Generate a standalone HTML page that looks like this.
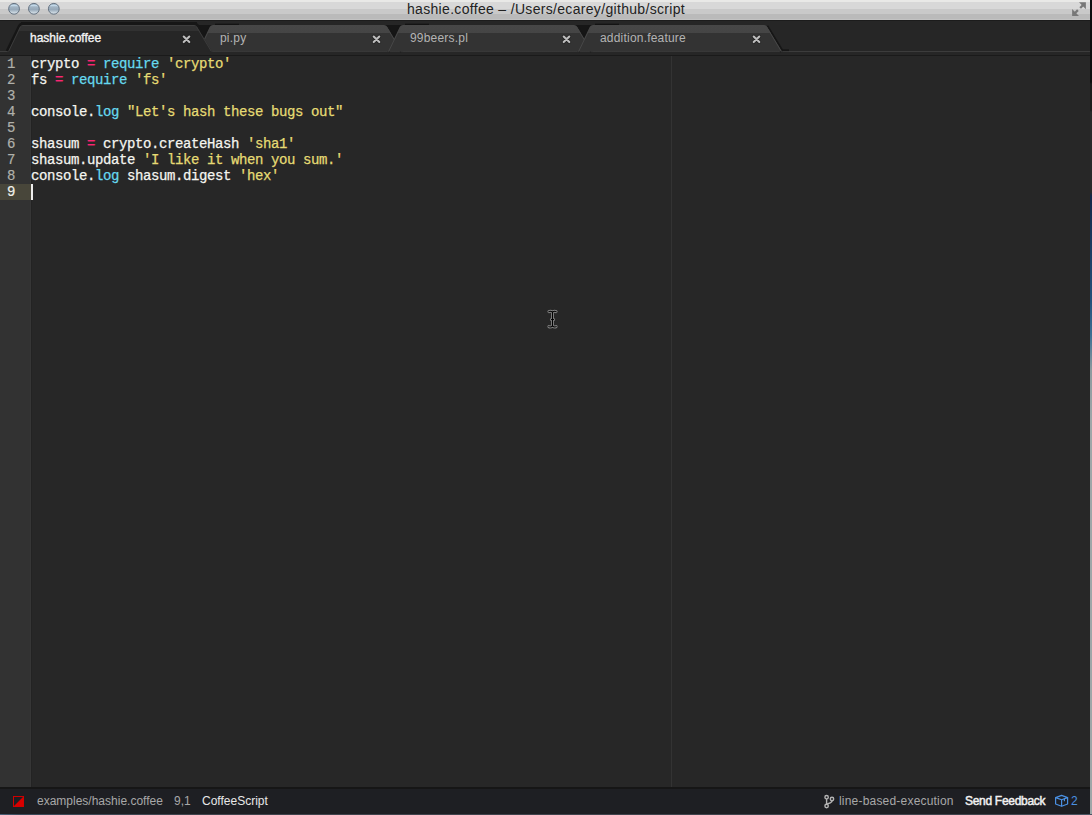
<!DOCTYPE html>
<html><head><meta charset="utf-8">
<style>
html,body{margin:0;padding:0;}
body{width:1092px;height:815px;overflow:hidden;position:relative;background:linear-gradient(#0e0e0e 0px,#0e0e0e 82px,#1c1c1c 84px,#1c1c1c 110px,#2a2a2a 112px,#2a2a2a 192px,#142848 196px,#24507a 300px,#3d6f92 335px,#8c9a9e 370px,#9ea6a8 420px,#9ea6a8 815px);font-family:"Liberation Sans",sans-serif;}
#win{position:absolute;left:0;top:0;width:1090px;height:814px;background:#262626;overflow:hidden;}
#bottomstrip{position:absolute;left:0;top:813.5px;width:1092px;height:2px;background:linear-gradient(90deg,#4a6078 0px,#3a4a5a 20px,#40434c 200px,#40434c 1000px,#4a5563 1092px);}
#title{position:absolute;left:0;top:0;width:1090px;height:20px;background:linear-gradient(#e9e9e7 0px,#e9e9e7 2px,#d8d8d8 2px,#d8d8d8 9px,#c9c9c9 9px,#c9c9c9 14px,#bababa 14px,#bababa 19.5px,#c2c2c2 19.5px);}
#title .t{position:absolute;left:0;width:1092px;top:1px;text-align:center;font-size:14px;line-height:16px;color:#222;letter-spacing:0.32px;}
#tabs{position:absolute;left:0;top:20px;width:1090px;height:36px;}
#editor{position:absolute;left:0;top:56px;width:1090px;height:731px;background:#272727;}
#gutter{position:absolute;left:0;top:0;width:31px;height:731px;background:#323232;box-shadow:inset -1px 0 0 #363636;}
#gshade{position:absolute;left:31px;top:0;width:1px;height:731px;background:#232323;}
.ln{position:absolute;left:0;width:31px;height:16px;font-family:"Liberation Mono",monospace;font-size:14px;line-height:16px;color:#b0b0aa;-webkit-text-stroke:0.2px currentColor;}
.ln span{position:absolute;left:7px;top:0;}
.hl{background:#48463a;color:#f0f0ea;}
#code{position:absolute;left:31px;top:0;-webkit-text-stroke:0.25px currentColor;font-family:"Liberation Mono",monospace;font-size:14px;letter-spacing:-0.4px;line-height:16px;color:#f5f5f0;white-space:pre;}
#code div{height:16px;}
.k{color:#f92672;}
.s{color:#e6db74;}
.f{color:#66d9ef;}
#cursor{position:absolute;left:31px;top:128px;width:1.5px;height:16px;background:#ececec;}
#wrap{position:absolute;left:671px;top:0;width:1px;height:731px;background:#333333;}
.tl{position:absolute;top:11px;font-size:12px;line-height:14px;color:#b4b4b4;white-space:nowrap;letter-spacing:0.2px;}
.tl.act{color:#f4f4f4;letter-spacing:0;-webkit-text-stroke:0.35px #f4f4f4;}
#status{position:absolute;left:0;top:787px;width:1090px;height:28px;background:#1e1f23;border-top:2px solid #161616;box-sizing:border-box;font-size:12px;color:#a8a8a8;}
#status .it{position:absolute;top:5px;line-height:14px;white-space:nowrap;}
</style></head>
<body>
<div id="win">
  <div id="title">
    <svg width="1090" height="20" style="position:absolute;left:0;top:0;display:block">
      <defs>
        <linearGradient id="tl" x1="0" y1="0" x2="0" y2="1">
          <stop offset="0" stop-color="#7f93a5"/>
          <stop offset="0.18" stop-color="#c6dcec"/>
          <stop offset="0.32" stop-color="#a3b5c4"/>
          <stop offset="0.58" stop-color="#97a9b9"/>
          <stop offset="0.85" stop-color="#c9d5de"/>
          <stop offset="1" stop-color="#d8e0e6"/>
        </linearGradient>
      </defs>
      <circle cx="14.05" cy="8.8" r="5.4" fill="url(#tl)" stroke="#5b6a79" stroke-width="0.9"/>
      <circle cx="33.9" cy="8.8" r="5.4" fill="url(#tl)" stroke="#5b6a79" stroke-width="0.9"/>
      <circle cx="53.8" cy="8.8" r="5.4" fill="url(#tl)" stroke="#5b6a79" stroke-width="0.9"/>
      <path d="M1079,2.2 L1085.9,2.2 L1085.9,9.2 Z" fill="#787878"/>
      <path d="M1083.8,4.4 L1080.2,8" stroke="#787878" stroke-width="2.2"/>
      <path d="M1072.1,9 L1072.1,15.9 L1079,15.9 Z" fill="#787878"/>
      <path d="M1074.3,13.7 L1077.9,10.1" stroke="#787878" stroke-width="2.2"/>
    </svg>
    <div class="t">hashie.coffee – /Users/ecarey/github/script</div>
  </div>
  <div id="tabs"><svg width="1090" height="36" viewBox="0 20 1090 36" style="position:absolute;left:0;top:0;display:block">
<defs>
<linearGradient id="ga" gradientUnits="userSpaceOnUse" x1="0" y1="25" x2="0" y2="52"><stop offset="0" stop-color="#3e3e3e"/><stop offset="0.037" stop-color="#3e3e3e"/><stop offset="0.037" stop-color="#313131"/><stop offset="0.222" stop-color="#313131"/><stop offset="0.222" stop-color="#262626"/><stop offset="1" stop-color="#262626"/></linearGradient>
<linearGradient id="gi" gradientUnits="userSpaceOnUse" x1="0" y1="25" x2="0" y2="52"><stop offset="0" stop-color="#474747"/><stop offset="0.296" stop-color="#454545"/><stop offset="0.296" stop-color="#333333"/><stop offset="1" stop-color="#333333"/></linearGradient>
</defs>
<rect x="0" y="20" width="1090" height="36" fill="#262626"/>
<rect x="0" y="20" width="1090" height="1" fill="#1c1c1c"/>
<rect x="0" y="51" width="1090" height="1" fill="#3c3c3c"/>
<rect x="0" y="55" width="1090" height="1" fill="#1a1a1a"/>
<rect x="194" y="25" width="19" height="14" fill="#161616"/>
<rect x="384" y="25" width="19" height="14" fill="#161616"/>
<rect x="574" y="25" width="19" height="14" fill="#161616"/>
<path d="M198,51.5 L210.4,26.2" fill="none" stroke="#161616" stroke-width="3.6"/>
<path d="M386.6,26.2 L402,51.5" fill="none" stroke="#161616" stroke-width="3.6"/>
<path d="M388,51.5 L400.4,26.2" fill="none" stroke="#161616" stroke-width="3.6"/>
<path d="M576.6,26.2 L592,51.5" fill="none" stroke="#161616" stroke-width="3.6"/>
<path d="M578,51.5 L590.4,26.2" fill="none" stroke="#161616" stroke-width="3.6"/>
<path d="M766.6,26.2 L782,51.5" fill="none" stroke="#161616" stroke-width="3.6"/>
<path d="M782,50.2 L789,50.2" stroke="#161616" stroke-width="1.8"/>
<path d="M8,51.5 L20.2,26.6 Q21,25 23,25 L194,25 Q196,25 196.9,26.6 L212,51.5" fill="none" stroke="#161616" stroke-width="5" stroke-linejoin="round"/>
<path d="M21,23.5 L197,23.5" fill="none" stroke="#161616" stroke-width="3"/>
<path d="M198,51.5 L210.2,26.6 Q211,25 213,25 L384,25 Q386,25 386.9,26.6 L402,51.5 Z" fill="url(#gi)"/>
<path d="M198.6,51.5 L210.6,26.6" stroke="#474747" stroke-width="1" fill="none"/>
<path d="M386.4,26.6 L401.4,51.5" stroke="#474747" stroke-width="1" fill="none"/>
<path d="M373.7,36.5 L379.3,42.099999999999994 M379.3,36.5 L373.7,42.099999999999994" stroke="#141414" stroke-width="3.6" stroke-linecap="round" opacity="0.55"/>
<path d="M373.7,36.5 L379.3,42.099999999999994 M379.3,36.5 L373.7,42.099999999999994" stroke="#bdbdbd" stroke-width="2.1" stroke-linecap="round"/>
<path d="M388,51.5 L400.2,26.6 Q401,25 403,25 L574,25 Q576,25 576.9,26.6 L592,51.5 Z" fill="url(#gi)"/>
<path d="M388.6,51.5 L400.6,26.6" stroke="#474747" stroke-width="1" fill="none"/>
<path d="M576.4,26.6 L591.4,51.5" stroke="#474747" stroke-width="1" fill="none"/>
<path d="M563.7,36.5 L569.3,42.099999999999994 M569.3,36.5 L563.7,42.099999999999994" stroke="#141414" stroke-width="3.6" stroke-linecap="round" opacity="0.55"/>
<path d="M563.7,36.5 L569.3,42.099999999999994 M569.3,36.5 L563.7,42.099999999999994" stroke="#bdbdbd" stroke-width="2.1" stroke-linecap="round"/>
<path d="M578,51.5 L590.2,26.6 Q591,25 593,25 L764,25 Q766,25 766.9,26.6 L782,51.5 Z" fill="url(#gi)"/>
<path d="M578.6,51.5 L590.6,26.6" stroke="#474747" stroke-width="1" fill="none"/>
<path d="M766.4,26.6 L781.4,51.5" stroke="#474747" stroke-width="1" fill="none"/>
<path d="M753.7,36.5 L759.3,42.099999999999994 M759.3,36.5 L753.7,42.099999999999994" stroke="#141414" stroke-width="3.6" stroke-linecap="round" opacity="0.55"/>
<path d="M753.7,36.5 L759.3,42.099999999999994 M759.3,36.5 L753.7,42.099999999999994" stroke="#bdbdbd" stroke-width="2.1" stroke-linecap="round"/>
<rect x="8" y="51" width="204" height="4" fill="#262626"/>
<path d="M8,51.5 L20.2,26.6 Q21,25 23,25 L194,25 Q196,25 196.9,26.6 L212,51.5 Z" fill="url(#ga)"/>
<path d="M8.6,51.5 L20.6,26.6" stroke="#3b3b3b" stroke-width="1" fill="none"/>
<path d="M196.4,26.6 L211.4,51.5" stroke="#3b3b3b" stroke-width="1" fill="none"/>
<path d="M183.7,36.5 L189.3,42.099999999999994 M189.3,36.5 L183.7,42.099999999999994" stroke="#141414" stroke-width="3.6" stroke-linecap="round" opacity="0.55"/>
<path d="M183.7,36.5 L189.3,42.099999999999994 M189.3,36.5 L183.7,42.099999999999994" stroke="#bdbdbd" stroke-width="2.1" stroke-linecap="round"/>
<rect x="215" y="23.7" width="24" height="1.2" fill="#121212"/>
<rect x="405" y="23.7" width="24" height="1.2" fill="#121212"/>
<rect x="595" y="23.7" width="24" height="1.2" fill="#121212"/>
</svg>
<div class="tl act" style="left:30px">hashie.coffee</div>
<div class="tl" style="left:220px">pi.py</div>
<div class="tl" style="left:410px">99beers.pl</div>
<div class="tl" style="left:600px">addition.feature</div></div>
  <div id="editor">
    <div id="gutter">
      <div class="ln" style="top:0"><span>1</span></div>
      <div class="ln" style="top:16px"><span>2</span></div>
      <div class="ln" style="top:32px"><span>3</span></div>
      <div class="ln" style="top:48px"><span>4</span></div>
      <div class="ln" style="top:64px"><span>5</span></div>
      <div class="ln" style="top:80px"><span>6</span></div>
      <div class="ln" style="top:96px"><span>7</span></div>
      <div class="ln" style="top:112px"><span>8</span></div>
      <div class="ln hl" style="top:128px"><span>9</span></div>
    </div>
    <div id="gshade"></div>
    <div id="wrap"></div>
    <div id="code"><div>crypto <span class="k">=</span> <span class="f">require</span> <span class="s">'crypto'</span></div><div>fs <span class="k">=</span> <span class="f">require</span> <span class="s">'fs'</span></div><div></div><div>console.<span class="f">log</span> <span class="s">"Let's hash these bugs out"</span></div><div></div><div>shasum <span class="k">=</span> crypto.createHash <span class="s">'sha1'</span></div><div>shasum.update <span class="s">'I like it when you sum.'</span></div><div>console.<span class="f">log</span> shasum.digest <span class="s">'hex'</span></div><div></div></div>
    <div id="cursor"></div>
    <svg width="20" height="30" viewBox="542 306 20 30" style="position:absolute;left:542px;top:250px;display:block">
      <g fill="none" stroke="#8a8a8a" stroke-width="3" stroke-linecap="round" stroke-linejoin="round" opacity="0.9">
        <path d="M548.9,311.6 Q550.6,310.6 552.5,312.2 Q554.4,310.6 556.1,311.6 M552.5,312 L552.5,326 M548.9,326.6 Q550.6,327.6 552.5,326 Q554.4,327.6 556.1,326.6 M551.4,319.5 L553.6,319.5"/>
      </g>
      <g fill="none" stroke="#000" stroke-width="1.1" stroke-linecap="round">
        <path d="M548.9,311.6 Q550.6,310.6 552.5,312.2 Q554.4,310.6 556.1,311.6 M552.5,312 L552.5,326 M548.9,326.6 Q550.6,327.6 552.5,326 Q554.4,327.6 556.1,326.6 M551.4,319.5 L553.6,319.5"/>
      </g>
    </svg>
  </div>
  <div id="status">
    <svg width="1090" height="28" viewBox="0 787 1090 28" style="position:absolute;left:0;top:-2px;display:block">
      <rect x="13.5" y="796.5" width="10" height="10" fill="none" stroke="#d00000" stroke-width="1"/>
      <path d="M23.5,796.5 L23.5,806.5 L13.5,806.5 Z" fill="#d80000"/>
      <g fill="none" stroke="#b4b4b4" stroke-width="1.4">
        <circle cx="826.6" cy="797.2" r="1.7"/>
        <circle cx="832" cy="799" r="1.7"/>
        <circle cx="826.6" cy="806" r="1.7"/>
        <path d="M826.6,798.9 L826.6,804.3"/>
        <path d="M832,800.7 C832,803 829,803.3 826.8,804"/>
      </g>
      <g fill="none" stroke="#4a90e2" stroke-width="1.2" stroke-linejoin="round">
        <path d="M1055.6,797.6 L1061.6,795.4 L1067.6,797.6 L1061.6,799.8 Z"/>
        <path d="M1055.6,797.6 L1055.6,804 L1061.6,806.3 L1067.6,804 L1067.6,797.6"/>
        <path d="M1061.6,799.8 L1061.6,806.3"/>
        <path d="M1064.4,798.6 L1064.4,801.2"/>
      </g>
    </svg>
    <div class="it" style="left:37px">examples/hashie.coffee</div>
    <div class="it" style="left:174px">9,1</div>
    <div class="it" style="left:202px;color:#e8e8e8">CoffeeScript</div>
    <div class="it" style="left:839px;letter-spacing:0.2px">line-based-execution</div>
    <div class="it" style="left:965px;color:#f2f2f2;letter-spacing:-0.3px;-webkit-text-stroke:0.45px #f2f2f2">Send Feedback</div>
    <div class="it" style="left:1071px;color:#4a90e2">2</div>
  </div>
</div>
<div id="bottomstrip"></div>
</body></html>
